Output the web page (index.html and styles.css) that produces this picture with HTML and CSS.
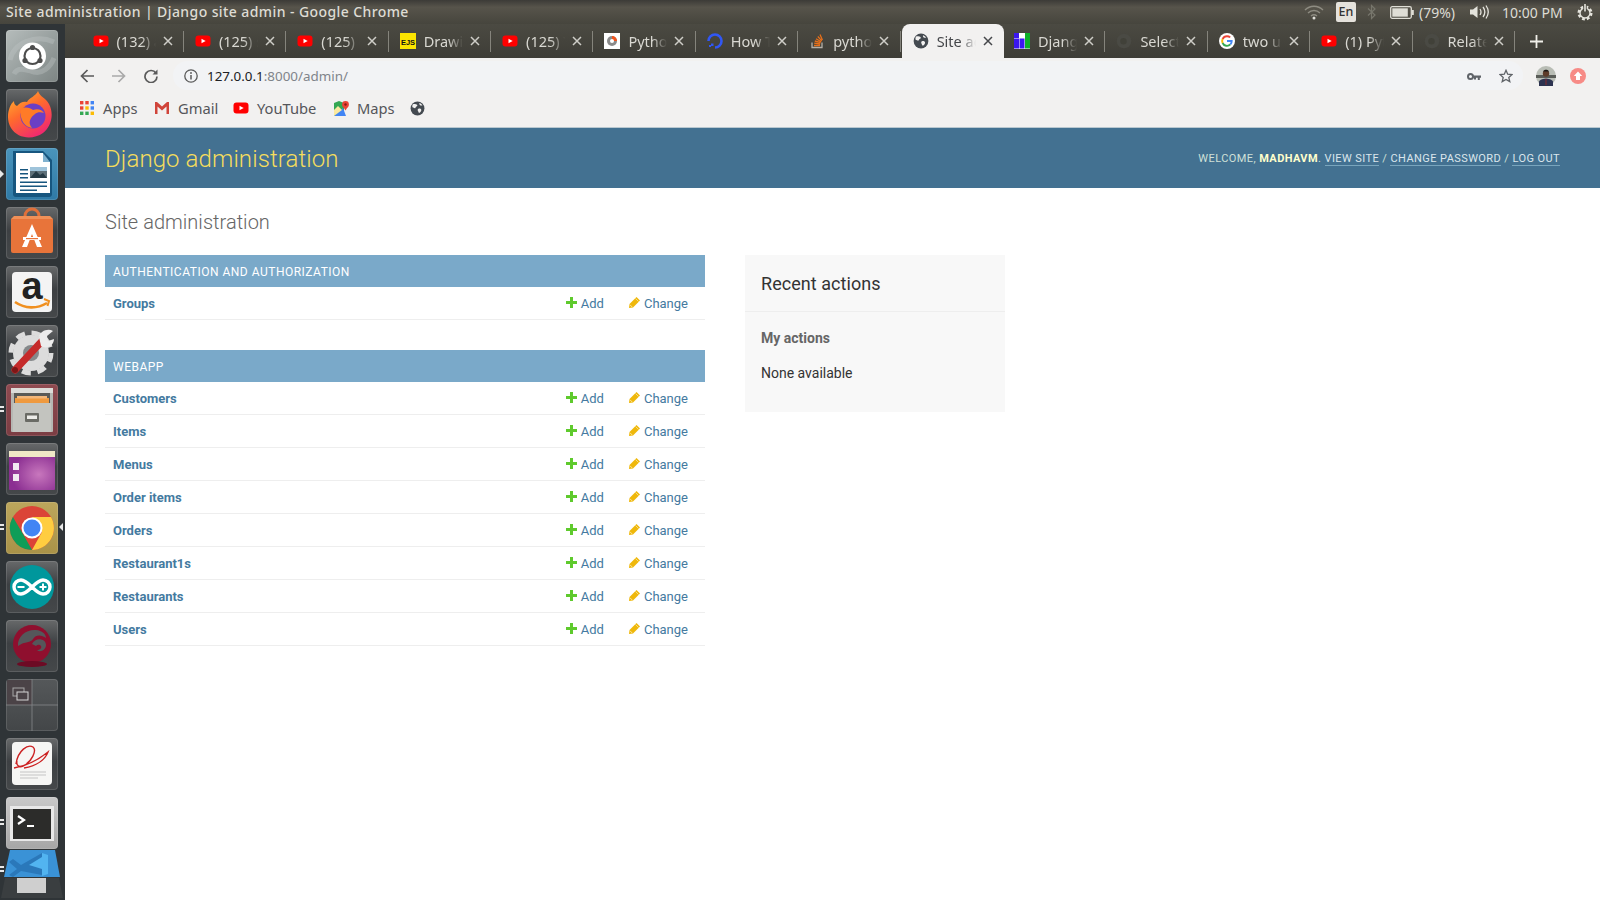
FILE: index.html
```html
<!DOCTYPE html>
<html lang="en">
<head>
<meta charset="utf-8">
<title>Site administration | Django site admin</title>
<link rel="stylesheet" href="styles.css">
</head>
<body>
<svg class="defs" width="0" height="0">
  <defs>
    <radialGradient id="purp" cx=".65" cy=".6" r=".6"><stop offset="0" stop-color="#c877bd"/><stop offset="1" stop-color="#8b2f92"/></radialGradient>
    <linearGradient id="ff" x1="0" y1="0" x2=".6" y2="1"><stop offset="0" stop-color="#ffbd30"/><stop offset=".5" stop-color="#ff6a2d"/><stop offset="1" stop-color="#f02a6e"/></linearGradient>
  </defs>
  <symbol id="yt" viewBox="0 0 16 16"><rect x="0.5" y="2.5" width="15" height="11" rx="3" fill="#f00"/><path d="M6.5 5.7 10.7 8l-4.2 2.3z" fill="#fff"/></symbol>
  <symbol id="x" viewBox="0 0 10 10"><path d="M1 1 9 9M9 1 1 9" stroke="currentColor" stroke-width="1.5" fill="none"/></symbol>
  <symbol id="globe" viewBox="0 0 16 16"><circle cx="8" cy="8" r="7.4" fill="#444a50"/><path d="M3 3.5c2-.6 3.5-.4 4.5.6.8.9 0 1.7-.9 2-.7.3-.4 1.3-1.2 1.5-.9.2-1.6-.6-2.800-.9C2.300 5.800 2.500 4.500 3 3.500zM9 8.200c1.300-.4 2.600 0 3 1 .3 1-.5 2.300-1.600 3.200-.8.500-1.500 0-1.500-.9 0-.6-.6-1-.7-1.700 0-.7.200-1.400.8-1.600zM10 2.200c1.300.4 2.500 1.300 3.200 2.500-.8.300-1.800.2-2.500-.3-.6-.4-.9-1.400-.7-2.200z" fill="#f2f1f0"/></symbol>
  <symbol id="dots" viewBox="0 0 16 16"><circle cx="8" cy="8" r="7.300" fill="#4a4a44"/><circle cx="7.500" cy="8.200" r="3.200" fill="#414139"/></symbol>
  <symbol id="plus" viewBox="0 0 11 11"><path d="M4 0h3v4h4v3H7v4H4V7H0V4h4z" fill="#5fca2d"/></symbol>
  <symbol id="pencil" viewBox="0 0 11 11"><path d="M7.500 0 11 3.500 4 10.500 0 11 .5 7z" fill="#efb80b"/><path d="M6.500 1.500 9.500 4.500" stroke="#fff" stroke-width=".5"/><path d="M1 7.800 3.200 10" stroke="#fff" stroke-width=".6"/></symbol>
</svg>

<header class="topbar">
  <span class="wintitle">Site administration | Django site admin - Google Chrome</span>
  <div class="tray">
    <svg class="t-wifi" width="20" height="16" viewBox="0 0 20 16"><path d="M1 6c5-5 13-5 18 0M4 9c3.500-3.300 8.500-3.300 12 0M7 12c1.800-1.500 4.200-1.500 6 0" stroke="#8e8c82" stroke-width="1.400" fill="none"/><circle cx="10" cy="14" r="1.500" fill="#e0dfd8"/></svg>
    <span class="t-en">En</span>
    <svg class="t-bt" width="9" height="16" viewBox="0 0 9 16"><path d="M1 4.500 8 11l-3.500 3.500v-13L8 5 1 11.500" stroke="#77766c" stroke-width="1.200" fill="none"/></svg>
    <svg class="t-bat" width="24" height="13" viewBox="0 0 24 13"><rect x=".7" y=".7" width="20.600" height="11.600" rx="1.500" fill="none" stroke="#dfded6" stroke-width="1.300"/><rect x="2.300" y="2.300" width="15.500" height="8.400" fill="#dfded6"/><rect x="22" y="4" width="1.800" height="5" fill="#dfded6"/></svg>
    <span class="t-pct">(79%)</span>
    <svg class="t-vol" width="20" height="16" viewBox="0 0 20 16"><path d="M1 5.500h3L8.500 2v12L4 10.500H1z" fill="#e4e3dc"/><path d="M11 5c1.200 1.800 1.200 4.200 0 6M14 3c2.200 3 2.200 7 0 10M17 1.500c2.800 4 2.800 9 0 13" stroke="#e4e3dc" stroke-width="1.300" fill="none"/></svg>
    <span class="t-time">10:00 PM</span>
    <svg class="t-gear" width="18" height="18" viewBox="0 0 18 18"><circle cx="9" cy="10" r="6.300" fill="none" stroke="#e6e5de" stroke-width="2.400" stroke-dasharray="2.800 2.100"/><circle cx="9" cy="10" r="5" fill="none" stroke="#e6e5de" stroke-width="1.400"/><path d="M9 1v8" stroke="#45443c" stroke-width="3.400"/><path d="M9 1v7.500" stroke="#e6e5de" stroke-width="1.600"/></svg>
  </div>
</header>

<div class="desk">
  <aside class="launcher">
    <div class="tile tile-dash"><svg viewBox="0 0 52 52"><path d="M4 30C8 12 30 4 48 12M8 44c4-8 12-4 20-2 8 2 16-4 20-14" stroke="#c3c9c8" stroke-width="5" fill="none" opacity=".35"/><circle cx="26.500" cy="26" r="13.500" fill="#fff"/><circle cx="26.500" cy="26" r="8" fill="none" stroke="#4d4d4d" stroke-width="2.200"/><circle cx="26.500" cy="17.500" r="2.600" fill="#4d4d4d"/><circle cx="19" cy="30.500" r="2.600" fill="#4d4d4d"/><circle cx="34" cy="30.500" r="2.600" fill="#4d4d4d"/></svg></div>
    <div class="tile"><svg viewBox="0 0 52 52"><path d="M32 2c2 6 8 7 11 13 5 9 3 22-6 29-10 7-25 6-32-5C-1 29 3 16 8 12c0 3 1 4 3 5 3-4 7-5 10-4 2-4 9-6 11-11z" fill="url(#ff)"/><circle cx="27" cy="27" r="12.500" fill="#6b3fc4"/><path d="M15 20c5-3 9-1 12 1 5-2 9 0 11 3-3-1-7-1-9 1-4 3-8 8-3 14-7-1-13-8-11-19z" fill="#ff7b27"/></svg></div>
    <div class="tile tile-writer"><i class="pip pip-tri"></i><svg viewBox="0 0 52 52"><path d="M7 3h30l9 9v34a3 3 0 0 1-3 3H10a3 3 0 0 1-3-3z" fill="#17567f"/><path d="M10 5h27v9h7v31H10z" fill="#fff"/><path d="M37 5l7 9h-7z" fill="#7fb1cf"/><rect x="24" y="19" width="17" height="11" fill="#5d6f78"/><path d="M24 30l6-7 4 4 3-2 4 5z" fill="#263a45"/><rect x="24" y="19" width="17" height="4" fill="#9ec3da"/><path d="M14 21h8v1.600h-8zM14 25h8v1.600h-8zM14 29h8v1.600h-8zM14 33.500h27v1.600H14zM14 37.500h27v1.600H14zM14 41.500h17v1.600H14z" fill="#17567f"/></svg></div>
    <div class="tile"><svg viewBox="0 0 52 52"><path d="M19 13v-4a7 7 0 0 1 14 0v4" stroke="#e0703a" stroke-width="3" fill="none"/><path d="M5 12h42v32a2 2 0 0 1-2 2H7a2 2 0 0 1-2-2z" fill="#e8743a"/><path d="M5 12h42l-3-3H8z" fill="#f09058"/><path d="M26 17 16 40h5l5-13 5 13h5z" fill="#fff"/><rect x="17" y="30" width="18" height="3" fill="#fff"/><rect x="20" y="31" width="12" height="1.200" fill="#e8743a"/></svg></div>
    <div class="tile"><svg viewBox="0 0 52 52"><rect x="6" y="6" width="40" height="40" rx="4" fill="#f4f4f4"/><text x="26" y="33" class="az">a</text><path d="M9 36c10 7 22 7 32 1" stroke="#f09020" stroke-width="2.600" fill="none"/><path d="M38 33l5 2-1.500 5" stroke="#f09020" stroke-width="2" fill="none"/></svg></div>
    <div class="tile"><svg viewBox="0 0 52 52"><circle cx="25" cy="28" r="18" fill="#dcdcdc"/><circle cx="25" cy="28" r="20" fill="none" stroke="#dcdcdc" stroke-width="5" stroke-dasharray="9 6.700"/><circle cx="25" cy="28" r="8" fill="#85888a"/><path d="M9 45 37 15" stroke="#c52a2a" stroke-width="7" stroke-linecap="round"/><path d="M33 12c1-6 9-9 14-6l-6 5 1 5 6-2c0 6-7 11-13 7z" fill="#ececec"/><circle cx="9" cy="45" r="3" fill="#7d1616"/></svg></div>
    <div class="tile tile-files"><i class="pip pip-dash"></i><svg viewBox="0 0 52 52"><rect x="5" y="4" width="42" height="44" rx="1" fill="#b6b7b3"/><rect x="5" y="4" width="42" height="5" fill="#dcdcd8"/><rect x="8" y="9" width="36" height="11" fill="#5a5a56"/><rect x="9" y="14" width="34" height="6" fill="#ef9a3f"/><rect x="11" y="12" width="30" height="2.500" fill="#f3b77a"/><rect x="7" y="19" width="38" height="29" fill="#c3c4bf"/><rect x="19" y="29" width="14" height="9" rx="1" fill="#6a6b65"/><rect x="21" y="31.500" width="10" height="3.500" fill="#ecece8"/></svg></div>
    <div class="tile"><svg viewBox="0 0 52 52"><rect x="3" y="8" width="46" height="39" rx="1" fill="url(#purp)"/><rect x="3" y="8" width="46" height="6" fill="#f0e8c6"/><rect x="7" y="20" width="6" height="7" fill="#f2eaf2"/><rect x="7" y="31" width="6" height="7" fill="#f2eaf2"/></svg></div>
    <div class="tile tile-chrome"><i class="pip pip-dash"></i><i class="pip pip-right"></i><svg viewBox="0 0 52 52"><circle cx="26" cy="26" r="22" fill="#db4437"/><path d="M26 48A22 22 0 0 1 6.900 15L17 32z" fill="#0f9d58"/><path d="M26 48 36 30l-.500-.800L26 15h19a22 22 0 0 1-19 33z" fill="#ffcd40"/><circle cx="26" cy="26" r="10.500" fill="#fff"/><circle cx="26" cy="26" r="8.500" fill="#4285f4"/></svg></div>
    <div class="tile"><svg viewBox="0 0 52 52"><circle cx="26" cy="26" r="22" fill="#00979c"/><path d="M15 19a7 7 0 1 0 0 14c8 0 14-14 22-14a7 7 0 1 1 0 14c-8 0-14-14-22-14z" fill="none" stroke="#fff" stroke-width="3.400"/><path d="M11.500 26h7M33.500 26h7M37 22.500v7" stroke="#fff" stroke-width="2"/></svg></div>
    <div class="tile"><svg viewBox="0 0 52 52"><circle cx="26" cy="24" r="19" fill="#8f0f2e"/><path d="M12 26c-1-10 9-17 18-16 6 .500 10 4 10 8-4-3-10-4-13 1-2 4-8 2-15 7z" fill="#55575a"/><path d="M26 24c3-7 14-6 14 1 0 5-6 8-9 5 3 0 5-2 4-4-1-1-3-2-5 0z" fill="#55575a"/><ellipse cx="26" cy="44" rx="15" ry="3" fill="#6d0a24"/></svg></div>
    <div class="tile tile-grid"><svg viewBox="0 0 52 52"><rect x="1" y="1" width="25" height="25" fill="#4b4347"/><path d="M26 0v52M0 26h52" stroke="#85888a" stroke-width=".8"/><rect x="7" y="9" width="11" height="8" fill="none" stroke="#a6a6a6"/><rect x="11" y="13" width="11" height="8" fill="#4b4347" stroke="#d5d5d5"/></svg></div>
    <div class="tile"><svg viewBox="0 0 52 52"><rect x="6" y="4" width="40" height="43" rx="4" fill="#f6f6f4"/><path d="M10 26C12 12 22 6 27 9c4 3-1 15-10 19-4 2-7-1-6-5M8 30c12-2 24-8 34-16-3 8-12 14-24 16" stroke="#cc2222" stroke-width="1.400" fill="none"/><path d="M14 34h26M14 37h26M14 40h18" stroke="#c4c4c4" stroke-width="1"/></svg></div>
    <div class="tile tile-term"><i class="pip pip-dash"></i><svg viewBox="0 0 52 52"><rect x="4" y="9" width="44" height="35" fill="#e8e8e8"/><rect x="7" y="12" width="38" height="30" fill="#2c2c2a"/><path d="M12 19l6 4-6 4" stroke="#fff" stroke-width="2.200" fill="none"/><path d="M21 29h7" stroke="#fff" stroke-width="2"/></svg></div>
    <div class="tile tile-code"><i class="pip pip-dash"></i><svg viewBox="0 0 56 48"><path d="M6 0h45l5 27H0z" fill="#3a92d6"/><path d="M38 3 17 15 9 9 5 12l8 7-8 6 4 2 8-6 21 4z" fill="#2a78ba"/><path d="M38 3l6 2v19l-6 2v-7l-13-4 13-8z" fill="#52b4f0"/><path d="M1 28h54l4 20H-3z" fill="#3a3e40"/><rect x="13" y="28" width="29" height="15" fill="#cfcfcf"/></svg></div>
  </aside>

  <div class="browser">
    <nav class="tabs">
      <div class="tab"><svg class="fav"><use href="#yt"/></svg><span class="ttl">(132) a</span><svg class="cl"><use href="#x"/></svg></div>
      <div class="tab"><svg class="fav"><use href="#yt"/></svg><span class="ttl">(125) s</span><svg class="cl"><use href="#x"/></svg></div>
      <div class="tab"><svg class="fav"><use href="#yt"/></svg><span class="ttl">(125) c</span><svg class="cl"><use href="#x"/></svg></div>
      <div class="tab"><svg class="fav" viewBox="0 0 16 16"><rect width="16" height="16" fill="#fbe400"/><text x="8" y="11.500" class="ejs">EJS</text></svg><span class="ttl">Drawing</span><svg class="cl"><use href="#x"/></svg></div>
      <div class="tab"><svg class="fav"><use href="#yt"/></svg><span class="ttl">(125) Y</span><svg class="cl"><use href="#x"/></svg></div>
      <div class="tab"><svg class="fav" viewBox="0 0 16 16"><rect width="16" height="16" fill="#fff"/><circle cx="8" cy="8" r="5" fill="#8a8a8a"/><path d="M8 3a5 5 0 0 1 5 5H8z" fill="#f0541e"/><circle cx="8" cy="8" r="2" fill="#fff"/></svg><span class="ttl">Python</span><svg class="cl"><use href="#x"/></svg></div>
      <div class="tab"><svg class="fav" viewBox="0 0 16 16"><path d="M8 14.500A6.500 6.500 0 1 0 1.500 8" fill="none" stroke="#3157f5" stroke-width="2.600"/><path d="M4 10.500h2.500V13H4zM2 12h2v2H2z" fill="#3157f5"/></svg><span class="ttl">How To</span><svg class="cl"><use href="#x"/></svg></div>
      <div class="tab"><svg class="fav" viewBox="0 0 16 16"><path d="M3 9.500v5h10v-5" fill="none" stroke="#b4b0a8" stroke-width="1.300"/><path d="M5 12.500h6M5.200 10.200l6 .800M5.800 8l5.800 1.600M7 5.700l5.200 3M8.800 3.500l4 4.400M11 1.500l2.400 5.500" stroke="#e8701a" stroke-width="1.300" fill="none"/></svg><span class="ttl">python</span><svg class="cl"><use href="#x"/></svg></div>
      <div class="tab tab-active"><svg class="fav"><use href="#globe"/></svg><span class="ttl">Site adm</span><svg class="cl"><use href="#x"/></svg></div>
      <div class="tab"><svg class="fav" viewBox="0 0 16 16"><rect width="16" height="16" fill="#fff"/><rect width="5" height="5" fill="#3b16f0"/><rect x="5.500" y="5.500" width="5" height="10" fill="#3b16f0"/><rect y="5.500" width="5" height="10" fill="#3b16f0"/><rect x="11" width="5" height="15.500" fill="#0cb028"/></svg><span class="ttl">Django</span><svg class="cl"><use href="#x"/></svg></div>
      <div class="tab"><svg class="fav"><use href="#dots"/></svg><span class="ttl">Select</span><svg class="cl"><use href="#x"/></svg></div>
      <div class="tab"><svg class="fav" viewBox="0 0 16 16"><circle cx="8" cy="8" r="8" fill="#fff"/><path d="M8 3.200a4.800 4.800 0 0 1 3.200 1.200" stroke="#ea4335" stroke-width="1.900" fill="none"/><path d="M3.600 6A4.800 4.800 0 0 1 8 3.200" stroke="#ea4335" stroke-width="1.900" fill="none"/><path d="M3.600 10A4.800 4.800 0 0 1 3.600 6" stroke="#fbbc05" stroke-width="1.900" fill="none"/><path d="M11.400 11.400A4.800 4.800 0 0 1 3.600 10" stroke="#34a853" stroke-width="1.900" fill="none"/><path d="M8 8h4.700a4.800 4.800 0 0 1-1.300 3.400" stroke="#4285f4" stroke-width="1.900" fill="none"/></svg><span class="ttl">two u</span><svg class="cl"><use href="#x"/></svg></div>
      <div class="tab"><svg class="fav"><use href="#yt"/></svg><span class="ttl">(1) Pyt</span><svg class="cl"><use href="#x"/></svg></div>
      <div class="tab"><svg class="fav"><use href="#dots"/></svg><span class="ttl">Relate</span><svg class="cl"><use href="#x"/></svg></div>
      <svg class="newtab" width="13" height="13" viewBox="0 0 13 13"><path d="M6.500 0v13M0 6.500h13" stroke="#f0efe9" stroke-width="1.800"/></svg>
    </nav>

    <div class="toolbar">
      <svg class="nav nav-back" width="14" height="14" viewBox="0 0 14 14"><path d="M14 7H1.500M7.500 1 1.500 7l6 6" stroke="#5a5a5a" stroke-width="1.700" fill="none"/></svg>
      <svg class="nav nav-fwd" width="14" height="14" viewBox="0 0 14 14"><path d="M0 7h12.500M6.500 1l6 6-6 6" stroke="#a9a9a9" stroke-width="1.700" fill="none"/></svg>
      <svg class="nav nav-rel" width="14" height="14" viewBox="0 0 14 14"><path d="M12 4.200A6 6 0 1 0 13 7.500" stroke="#5a5a5a" stroke-width="1.700" fill="none"/><path d="M13.500 .5v5h-5z" fill="#5a5a5a"/></svg>
      <div class="omni">
        <svg class="info" width="14" height="14" viewBox="0 0 14 14"><circle cx="7" cy="7" r="6.200" fill="none" stroke="#5a5a5a" stroke-width="1.300"/><path d="M7 6v4.500" stroke="#5a5a5a" stroke-width="1.500"/><circle cx="7" cy="4" r=".95" fill="#5a5a5a"/></svg>
        <span class="url">127.0.0.1<span class="url-dim">:8000/admin/</span></span>
        <svg class="key" width="14" height="9" viewBox="0 0 14 9"><circle cx="3.500" cy="4.500" r="2.500" fill="none" stroke="#5f6368" stroke-width="2"/><path d="M6 3.400h8v2.300h-1.200V8h-2V5.700H9V7.500H7V5.700H6z" fill="#5f6368"/></svg>
        <svg class="star" width="14" height="14" viewBox="0 0 14 14"><path d="M7 1.300l1.700 3.900 4.300.4-3.200 2.800 1 4.200L7 10.400l-3.800 2.200 1-4.200L1 5.600l4.300-.4z" fill="none" stroke="#5f6368" stroke-width="1.300"/></svg>
      </div>
      <svg class="avatar" width="20" height="20" viewBox="0 0 20 20"><circle cx="10" cy="10" r="10" fill="#b9bdb5"/><path d="M0 9h20v3H0z" fill="#5a5d58"/><path d="M3 20V16c0-2 3-3 7-3.500 4 .5 7 1.500 7 3.500v4z" fill="#2d3350"/><circle cx="10" cy="7.500" r="3.200" fill="#5e3c2a"/><path d="M7 5.500c1-2.500 5-2.500 6 0z" fill="#1c1816"/><path d="M9.500 13h1v6h-1z" fill="#8a2a2a"/></svg>
      <svg class="ext" width="16" height="16" viewBox="0 0 16 16"><circle cx="8" cy="8" r="8" fill="#f78b86"/><path d="M8 3.500 12.200 8H10v4H6V8H3.800z" fill="#fff"/></svg>
    </div>

    <div class="bookmarks">
      <span class="bm bm-apps"><svg width="14" height="14" viewBox="0 0 14 14"><rect width="3.400" height="3.400" fill="#ea4335"/><rect x="5.300" width="3.400" height="3.400" fill="#ea4335"/><rect x="10.600" width="3.400" height="3.400" fill="#4285f4"/><rect y="5.300" width="3.400" height="3.400" fill="#ea4335"/><rect x="5.300" y="5.300" width="3.400" height="3.400" fill="#fbbc05"/><rect x="10.600" y="5.300" width="3.400" height="3.400" fill="#4285f4"/><rect y="10.600" width="3.400" height="3.400" fill="#34a853"/><rect x="5.300" y="10.600" width="3.400" height="3.400" fill="#34a853"/><rect x="10.600" y="10.600" width="3.400" height="3.400" fill="#fbbc05"/></svg>Apps</span>
      <span class="bm bm-gmail"><svg width="14" height="12" viewBox="0 0 14 12"><path d="M0 0h2l5 4.500L12 0h2v12h-2.500V4.500L7 8.500 2.500 4.500V12H0z" fill="#d0443a"/></svg>Gmail</span>
      <span class="bm bm-yt"><svg width="16" height="16"><use href="#yt"/></svg>YouTube</span>
      <span class="bm bm-maps"><svg width="15" height="15" viewBox="0 0 15 15"><path d="M0 2 5 0l5 2 0 13-5-2-5 2z" fill="#34a853"/><path d="M0 15 9 7l3 8z" fill="#4285f4"/><path d="M0 15V9l4-4 4 4z" fill="#fbe9a0"/><circle cx="11.500" cy="3.500" r="3.400" fill="#ea4335"/><path d="M9 5.500l2.500 4 2.500-4z" fill="#ea4335"/><circle cx="11.500" cy="3.500" r="1.200" fill="#8c1c12"/></svg>Maps</span>
      <svg class="bm-globe" width="15" height="15"><use href="#globe"/></svg>
    </div>

    <main class="page">
      <div class="dj-header">
        <div class="branding">Django administration</div>
        <div class="usertools">Welcome, <strong>madhavm</strong>. <a>View site</a> / <a>Change password</a> / <a>Log out</a></div>
      </div>
      <div class="content">
        <h1 class="h1">Site administration</h1>
        <div class="columns">
          <div class="apps">
            <section class="module">
              <div class="caption">Authentication and Authorization</div>
              <div class="row"><a class="model">Groups</a><a class="act act-add"><svg class="ic"><use href="#plus"/></svg>Add</a><a class="act act-chg"><svg class="ic"><use href="#pencil"/></svg>Change</a></div>
            </section>
            <section class="module">
              <div class="caption">Webapp</div>
              <div class="row"><a class="model">Customers</a><a class="act act-add"><svg class="ic"><use href="#plus"/></svg>Add</a><a class="act act-chg"><svg class="ic"><use href="#pencil"/></svg>Change</a></div>
              <div class="row"><a class="model">Items</a><a class="act act-add"><svg class="ic"><use href="#plus"/></svg>Add</a><a class="act act-chg"><svg class="ic"><use href="#pencil"/></svg>Change</a></div>
              <div class="row"><a class="model">Menus</a><a class="act act-add"><svg class="ic"><use href="#plus"/></svg>Add</a><a class="act act-chg"><svg class="ic"><use href="#pencil"/></svg>Change</a></div>
              <div class="row"><a class="model">Order items</a><a class="act act-add"><svg class="ic"><use href="#plus"/></svg>Add</a><a class="act act-chg"><svg class="ic"><use href="#pencil"/></svg>Change</a></div>
              <div class="row"><a class="model">Orders</a><a class="act act-add"><svg class="ic"><use href="#plus"/></svg>Add</a><a class="act act-chg"><svg class="ic"><use href="#pencil"/></svg>Change</a></div>
              <div class="row"><a class="model">Restaurant1s</a><a class="act act-add"><svg class="ic"><use href="#plus"/></svg>Add</a><a class="act act-chg"><svg class="ic"><use href="#pencil"/></svg>Change</a></div>
              <div class="row"><a class="model">Restaurants</a><a class="act act-add"><svg class="ic"><use href="#plus"/></svg>Add</a><a class="act act-chg"><svg class="ic"><use href="#pencil"/></svg>Change</a></div>
              <div class="row"><a class="model">Users</a><a class="act act-add"><svg class="ic"><use href="#plus"/></svg>Add</a><a class="act act-chg"><svg class="ic"><use href="#pencil"/></svg>Change</a></div>
            </section>
          </div>
          <aside class="recent">
            <h2 class="recent-h">Recent actions</h2>
            <h3 class="recent-sub">My actions</h3>
            <p class="recent-none">None available</p>
          </aside>
        </div>
      </div>
    </main>
  </div>
</div>
</body>
</html>
```

FILE: styles.css
```css
* { box-sizing: border-box; }
html, body { margin: 0; padding: 0; }
body { width: 1600px; height: 900px; overflow: hidden; background: #fff; font-family: "Noto Sans", sans-serif; display: flex; flex-direction: column; }
.defs { position: absolute; }
svg { display: block; }

/* top panel */
.topbar { height: 24px; flex: none; display: flex; align-items: center; padding-left: 6px; background: linear-gradient(#3c3b37, #57544b 30%, #46453d); color: #e6e5de; }
.wintitle { font-size: 14px; font-weight: 500; letter-spacing: .41px; white-space: nowrap; color: #dedcd4; margin-top: -1px; }
.tray { margin-left: auto; display: flex; align-items: center; height: 24px; font-size: 14px; color: #dddcd4; }
.t-wifi { margin-right: 12px; }
.t-en { width: 20px; height: 20px; background: #e5e2dc; color: #333; border-radius: 2px; font-size: 12.5px; font-weight: 500; text-align: center; line-height: 20px; margin-right: 11px; }
.t-bt { margin-right: 14px; }
.t-bat { margin-right: 5px; }
.t-pct { width: 38px; margin-right: 12px; white-space: nowrap; }
.t-vol { margin-right: 13px; }
.t-time { width: 62px; margin-right: 12px; white-space: nowrap; }
.t-gear { margin-right: 6px; }

.desk { flex: 1; display: flex; min-height: 0; }

/* launcher */
.launcher { width: 65px; flex: none; background: #2f3437; padding: 6px 0 0 6px; display: flex; flex-direction: column; gap: 7px; overflow: hidden; }
.tile { position: relative; width: 52px; height: 52px; flex: none; border-radius: 4px; background: linear-gradient(#67696a, #3d4043 45%, #45484a); box-shadow: inset 0 0 0 1px rgba(255,255,255,.12); }
.tile svg { width: 52px; height: 52px; }
.tile-dash { background: linear-gradient(135deg, #b5bcbb, #7d8584); }
.tile-writer { background: linear-gradient(#4a94bb, #2f7aa6); }
.tile-files { background: linear-gradient(#8f4a50, #7b3d43); }
.tile-chrome { background: linear-gradient(#bca65c, #a99248); }
.tile-grid { background: linear-gradient(#55585a, #434648); overflow: hidden; }
.tile-term { background: linear-gradient(#c9c9c9, #a6a6a6); }
.tile-code { background: none; box-shadow: none; height: 48px; margin-top: -6px; margin-left: -2px; width: 56px; }
.tile-code svg { width: 56px; height: 48px; overflow: visible; }
.pip { position: absolute; display: block; }
.pip-tri { left: -6px; top: 22px; border: 4px solid transparent; border-left: 4px solid #e8e8e8; border-right: 0; }
.pip-dash { left: -6px; top: 22px; width: 4px; height: 2px; background: #e8e8e8; box-shadow: 0 4px 0 #e8e8e8; }
.pip-right { left: 53px; top: 21px; border: 4px solid transparent; border-right: 4px solid #e8e8e8; border-left: 0; }
.tile-code .pip-dash { left: -4px; top: 16px; }
.az { font: 700 38px "Liberation Sans", sans-serif; fill: #222; text-anchor: middle; }
.ejs { font: 700 7.5px "Liberation Sans", sans-serif; fill: #111; text-anchor: middle; }

/* browser chrome */
.browser { flex: 1; display: flex; flex-direction: column; min-width: 0; }
.tabs { height: 34px; flex: none; display: flex; padding-left: 16.5px; background: linear-gradient(#4b4a42, #3e3d37); align-items: stretch; }
.tab { position: relative; width: 102.4px; flex: none; display: flex; align-items: center; padding-left: 11px; color: #d9d8d2; font-size: 14.5px; }
.tab::after { content: ""; position: absolute; right: 0; top: 7px; height: 21px; width: 1px; background: #85847c; }
.fav { width: 16px; height: 16px; flex: none; }
.ttl { width: 39px; margin-left: 8px; overflow: hidden; white-space: nowrap; -webkit-mask-image: linear-gradient(to right, #000 62%, transparent); mask-image: linear-gradient(to right, #000 62%, transparent); }
.cl { width: 10px; height: 10px; flex: none; margin-left: 7px; color: #cfcec8; }
.tab-active { background: #f2f1f0; color: #45474a; border-radius: 8px 8px 0 0; margin-left: 1px; margin-right: -1px; }
.tab-active::after { display: none; }
.tab-active .cl { color: #45474a; }
.newtab { margin-left: 15px; align-self: center; }

.toolbar { height: 36px; flex: none; display: flex; align-items: center; background: #f2f1f0; padding-left: 15px; }
.nav { flex: none; }
.nav-fwd { margin-left: 18px; }
.nav-rel { margin-left: 18px; }
.omni { width: 1350px; height: 29px; margin-left: 15px; margin-top: -2px; background: #f2f3f5; border-radius: 15px; display: flex; align-items: center; padding-left: 11px; }
.info { flex: none; margin-top: 2px; }
.url { margin-left: 9px; padding-top: 2px; font-size: 13.4px; color: #202124; white-space: nowrap; }
.url-dim { color: #80848a; }
.key { margin-left: auto; flex: none; margin-top: 2px; }
.star { margin-left: 18px; margin-right: 10px; flex: none; margin-top: 2px; }
.avatar { margin-left: 13px; flex: none; }
.ext { margin-left: 14px; flex: none; }

.bookmarks { height: 33px; flex: none; display: flex; align-items: center; background: #f2f1f0; padding: 0 0 5px 15px; font-size: 14.7px; color: #55565a; }
.bm { display: flex; align-items: center; white-space: nowrap; }
.bm svg { flex: none; }
.bm-apps svg { margin-right: 9px; }
.bm-apps { width: 75px; }
.bm-gmail svg { margin-right: 9px; }
.bm-gmail { width: 78px; }
.bm-yt svg { margin-right: 8px; }
.bm-yt { width: 101px; }
.bm-maps svg { margin-right: 8px; }
.bm-maps { width: 76px; }

/* django page */
.page { flex: 1; background: #fff; font-family: Roboto, sans-serif; min-height: 0; }
.dj-header { height: 61px; background: #437191; border-top: 1px solid #b9c8d0; display: flex; align-items: center; justify-content: space-between; padding: 0 40px; }
.branding { font-size: 24px; font-weight: 300; letter-spacing: .1px; color: #f5dd5d; padding-top: 2px; }
.usertools { font-size: 11px; letter-spacing: .42px; text-transform: uppercase; color: #cfe0d8; white-space: nowrap; }
.usertools strong { color: #ffc; font-weight: 700; }
.usertools a { color: #dbe6ec; border-bottom: 1px solid #79a5bd; }
.content { padding: 20px 40px; }
.h1 { margin: 0 0 20px; padding-top: 1px; height: 27px; font-size: 20px; font-weight: 300; letter-spacing: .03px; line-height: 27px; color: #666; }
.columns { display: flex; gap: 40px; align-items: flex-start; }
.apps { width: 600px; flex: none; }
.module { margin-bottom: 30px; }
.caption { height: 32px; line-height: 34px; padding: 0 8px; background: #7aa9c9; color: #fff; font-size: 12px; letter-spacing: .5px; text-transform: uppercase; }
.row { height: 33px; display: flex; align-items: center; padding: 0 17px 0 8px; border-bottom: 1px solid #eee; font-size: 13px; }
.model { color: #447aa0; font-weight: 700; margin-right: auto; }
.act { display: flex; align-items: center; color: #447aa0; }
.ic { width: 11px; height: 11px; margin-right: 4px; margin-top: -2px; }
.act-add { margin-right: 25px; }
.recent { width: 260px; flex: none; height: 157px; background: #f8f8f8; }
.recent-h { margin: 0; height: 57px; padding: 0 16px; line-height: 58px; font-size: 18px; font-weight: 400; letter-spacing: .05px; color: #333; border-bottom: 1px solid #eee; }
.recent-sub { margin: 16px 16px 0; font-size: 14px; line-height: 20px; font-weight: 700; color: #666; }
.recent-none { margin: 15px 16px 0; font-size: 14px; line-height: 20px; color: #333; }
```
